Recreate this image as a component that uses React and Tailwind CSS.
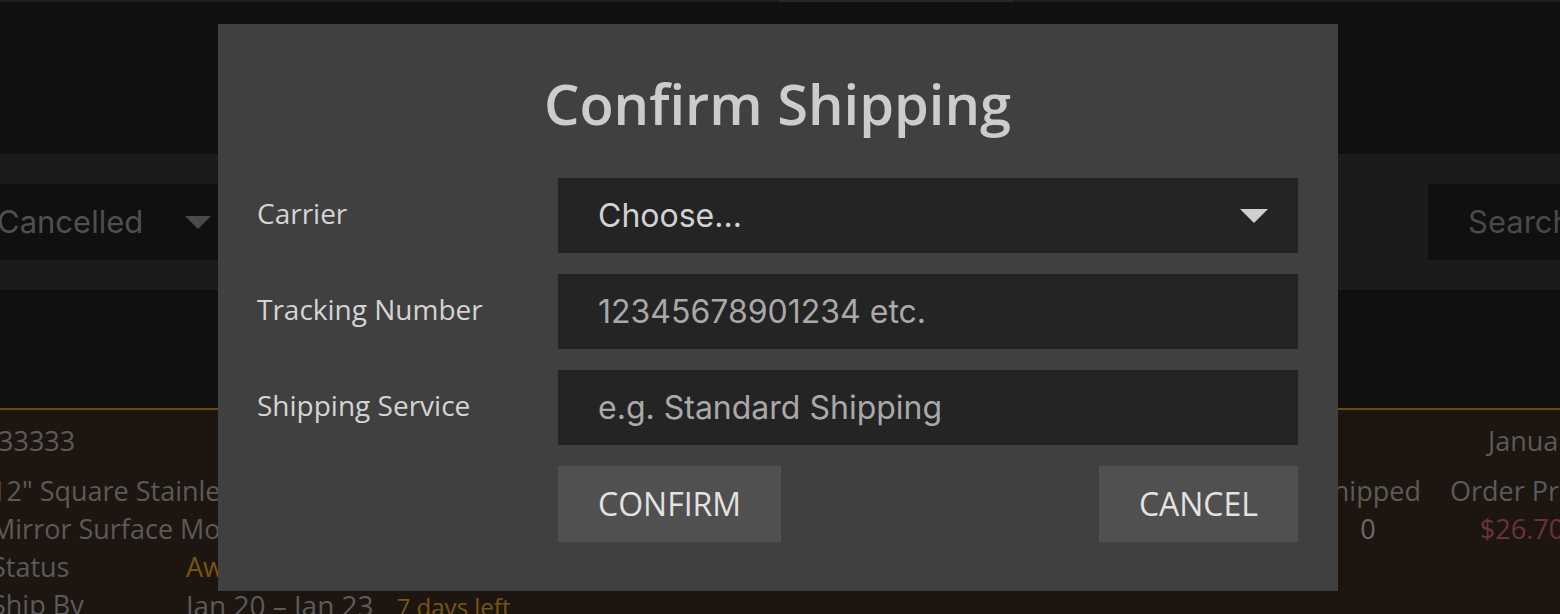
import React from 'react';

const sans = { fontFamily: '"Open Sans", "Noto Sans", sans-serif' };
const ui = { fontFamily: 'Inter, "Liberation Sans", sans-serif' };

function Caret({ className }) {
  return (
    <svg viewBox="0 0 28 14" className={className} fill="currentColor">
      <path d="M0 0h28L14 14z" />
    </svg>
  );
}

function Field({ label, children }) {
  return (
    <>
      <label className="self-center pb-[6px] text-[28px] text-[#d4d4d4]">{label}</label>
      {children}
    </>
  );
}

function ConfirmShippingModal() {
  return (
    <div className="absolute left-[218px] top-[24px] w-[1120px] bg-[#404040] pt-[46px] pb-[49px] pl-[39px] pr-[40px]">
      <h2 className="text-center text-[56px] font-semibold leading-[67px] text-[#cccccc]">Confirm Shipping</h2>
      <div className="mt-[41px] grid grid-cols-[301px_740px] gap-y-[21px]">
        <Field label="Carrier">
          <button className="flex h-[75px] items-center justify-between bg-[#242424] pl-[40px] pr-[30px] text-[32px] text-[#d2d2d2]" style={ui}>
            <span>Choose...</span>
            <Caret className="h-[14px] w-[28px] text-[#cfcfcf]" />
          </button>
        </Field>
        <Field label="Tracking Number">
          <input
            className="h-[75px] bg-[#242424] pl-[40px] text-[32px] text-[#d2d2d2] outline-none placeholder:text-[#a9a9a9]"
            style={ui}
            placeholder="12345678901234 etc."
          />
        </Field>
        <Field label="Shipping Service">
          <input
            className="h-[75px] bg-[#242424] pl-[40px] text-[32px] text-[#d2d2d2] outline-none placeholder:text-[#a9a9a9]"
            style={ui}
            placeholder="e.g. Standard Shipping"
          />
        </Field>
        <div />
        <div className="flex justify-between">
          <button className="h-[76px] bg-[#505050] px-10 text-[32px] text-[#e2e2e2]">CONFIRM</button>
          <button className="h-[76px] bg-[#505050] px-10 text-[32px] text-[#e2e2e2]">CANCEL</button>
        </div>
      </div>
    </div>
  );
}

export default function App() {
  return (
    <div className="relative h-[614px] w-[1560px] overflow-hidden bg-[#101010]" style={sans}>
      {/* page header strip */}
      <div className="flex h-[2px] bg-[#1c1c1c]">
        <div className="ml-[778px] w-[236px] bg-[#262626]" />
      </div>
      <div className="h-[152px]" />

      {/* filter bar */}
      <div className="flex h-[136px] items-center justify-between bg-[#1b1b1b]" style={ui}>
        <div className="flex h-[76px] w-[230px] items-center justify-between bg-[#101010] pr-[16px] -ml-[3px]">
          <span className="text-[31px] text-[#4f4f4f]">Cancelled</span>
          <Caret className="h-[13px] w-[26px] text-[#4a4a4a]" />
        </div>
        <div className="flex h-[76px] w-[180px] items-center bg-[#101010] pl-[40px] -mr-[48px]">
          <span className="text-[31px] text-[#494949]">Search</span>
        </div>
      </div>
      <div className="h-[118px]" />

      {/* order card */}
      <div className="flex h-[206px] justify-between border-t-2 border-[#6b4a10] bg-[#1d1610] text-[27px] leading-[38px] text-[#5a5a5a]">
        <div className="-ml-[9px] pt-[12px]">
          <div className="mb-[12px] pl-[7px]">33333</div>
          <div>12" Square Stainless Steel</div>
          <div>Mirror Surface Mosaic Tile</div>
          <div className="grid grid-cols-[195px_auto]">
            <span>Status</span>
            <span className="text-[#7a5510]">Awaiting Shipment</span>
            <span>Ship By</span>
            <span className="text-[28px]">
              Jan 20 – Jan 23<span className="ml-[23px] text-[24px] text-[#7a5510]">7 days left</span>
            </span>
          </div>
        </div>
        <div className="-mr-[180px] w-[422px] pt-[12px]">
          <div className="mb-[12px] pl-[170px]">January 16, 2018</div>
          <div className="flex gap-[28px]">
            <div className="w-[100px] text-center">
              <div>Shipped</div>
              <div className="text-[#6a6a6a]">0</div>
            </div>
            <div className="w-[152px] text-center">
              <div>Order Price</div>
              <div className="text-[#6b3434]">$26.70</div>
            </div>
          </div>
        </div>
      </div>

      <ConfirmShippingModal />
    </div>
  );
}
